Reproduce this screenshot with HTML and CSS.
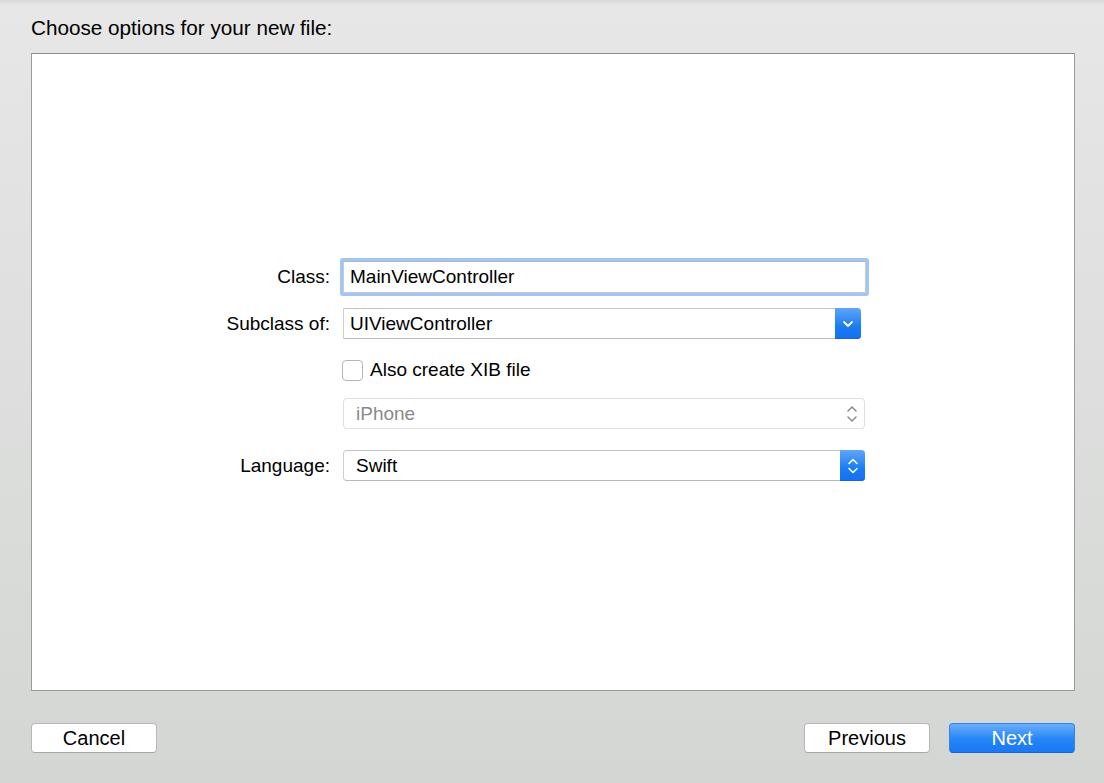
FILE: index.html
```html
<!DOCTYPE html>
<html>
<head>
<meta charset="utf-8">
<link rel="stylesheet" href="styles.css">
</head>
<body>
<div class="sheet">
  <div class="title">Choose options for your new file:</div>
  <div class="panel">
    <div class="form">
      <div class="row row-class">
        <div class="label">Class:</div>
        <div class="field focus"><span>MainViewController</span></div>
      </div>
      <div class="row row-sub">
        <div class="label">Subclass of:</div>
        <div class="popup combo">
          <span class="ptext">UIViewController</span>
          <span class="cbtn">
            <svg width="12" height="8" viewBox="0 0 12 8"><path d="M2 2 L6 6 L10 2" fill="none" stroke="#fff" stroke-width="1.8" stroke-linecap="round" stroke-linejoin="round"/></svg>
          </span>
        </div>
      </div>
      <div class="row row-check">
        <div class="label"></div>
        <div class="check"><span class="box"></span><span>Also create XIB file</span></div>
      </div>
      <div class="row row-dis">
        <div class="label"></div>
        <div class="popup disabled">
          <span class="ptext">iPhone</span>
          <span class="arrows">
            <svg width="12" height="20" viewBox="0 0 12 20"><path d="M2 7 L6 3 L10 7 M2 13 L6 17 L10 13" fill="none" stroke="#8a8a8a" stroke-width="1.5" stroke-linecap="round" stroke-linejoin="round"/></svg>
          </span>
        </div>
      </div>
      <div class="row row-lang">
        <div class="label">Language:</div>
        <div class="popup wide">
          <span class="ptext">Swift</span>
          <span class="sbtn">
            <svg width="12" height="20" viewBox="0 0 12 20"><path d="M2 7.5 L6 3.5 L10 7.5 M2 12.5 L6 16.5 L10 12.5" fill="none" stroke="#fff" stroke-width="1.6" stroke-linecap="round" stroke-linejoin="round"/></svg>
          </span>
        </div>
      </div>
    </div>
  </div>
  <div class="buttons">
    <div class="btn">Cancel</div>
    <div class="spacer"></div>
    <div class="btn">Previous</div>
    <div class="btn primary">Next</div>
  </div>
</div>
</body>
</html>
```
FILE: styles.css
```css
html, body {
  margin: 0;
  padding: 0;
}
body {
  width: 1104px;
  height: 783px;
  overflow: hidden;
  font-family: "Liberation Sans", Arial, sans-serif;
  color: #000;
  background: linear-gradient(to bottom, #d9dad9 0px, #e6e7e6 6px, #e3e4e3 120px, #d4d6d4 783px);
}
.sheet {
  padding: 0 29px 0 31px;
  height: 783px;
  box-sizing: border-box;
}
.title {
  font-size: 20.7px;
  padding-top: 16px;
  height: 53px;
  box-sizing: border-box;
  line-height: 24px;
  color: #000;
}
.panel {
  height: 638px;
  background: #fff;
  border: 1px solid #9b9b9b;
  border-top-color: #8a8a8a;
  box-sizing: border-box;
  padding-top: 206px;
}
.form {
  display: flex;
  flex-direction: column;
}
.row {
  display: flex;
  align-items: center;
}
.label {
  width: 310px;
  text-align: right;
  font-size: 19px;
  padding-right: 12px;
  box-sizing: border-box;
}
.row-class { height: 32px; margin-top: 1px; }
.row-sub { height: 31px; margin-top: 15px; }
.row-check { height: 22px; margin-top: 20px; }
.row-dis { height: 31px; margin-top: 17px; }
.row-lang { height: 31px; margin-top: 21px; }

.field {
  margin-left: 1px;
  width: 523px;
  height: 32px;
  box-sizing: border-box;
  border: 1px solid #c8c8c8;
  border-top-color: #b5b5b5;
  background: #fff;
  font-size: 19px;
  padding-left: 6px;
  display: flex;
  align-items: center;
}
.field.focus {
  box-shadow: 0 0 0 3px #9fc6f6;
  border-radius: 1px;
}
.popup {
  margin-left: 1px;
  height: 31px;
  box-sizing: border-box;
  border: 1px solid #cdcdcd;
  border-top-color: #c4c4c4;
  border-bottom-color: #b9b9b9;
  background: #fff;
  display: flex;
  align-items: center;
  font-size: 19px;
  position: relative;
}
.ptext {
  flex: 1;
  padding-left: 6px;
}
.combo {
  width: 518px;
  border-right: none;
  border-radius: 0 4px 4px 0;
}
.cbtn {
  width: 26px;
  align-self: stretch;
  margin: -1px 0;
  background: linear-gradient(to bottom, #5fa6f8, #1a7cf5 60%, #166ff0);
  border-radius: 0 4px 4px 0;
  display: flex;
  align-items: center;
  justify-content: center;
  box-shadow: inset 0 -1px 0 #1563d9;
}
.disabled {
  width: 522px;
  border-radius: 4px;
  border-color: #e0e0e0;
  color: #8a8a8a;
  padding-left: 6px;
}
.disabled .arrows {
  width: 24px;
  display: flex;
  justify-content: center;
}
.wide {
  width: 522px;
  border-radius: 4px;
  border-right: none;
  padding-left: 6px;
}
.sbtn {
  width: 25px;
  align-self: stretch;
  margin: -1px 0;
  background: linear-gradient(to bottom, #5fa6f8, #1a7cf5 60%, #166ff0);
  border-radius: 0 4px 4px 0;
  display: flex;
  align-items: center;
  justify-content: center;
  box-shadow: inset 0 -1px 0 #1563d9;
}
.check {
  display: flex;
  align-items: center;
  font-size: 19px;
}
.box {
  width: 21px;
  height: 21px;
  box-sizing: border-box;
  border: 1px solid #b4b4b4;
  border-radius: 4px;
  background: #fff;
  margin-right: 7px;
}
.buttons {
  display: flex;
  margin-top: 32px;
  gap: 19px;
}
.spacer { flex: 1; }
.btn {
  width: 126px;
  height: 30px;
  box-sizing: border-box;
  border: 1px solid #b8b8b8;
  border-bottom-color: #a8a8a8;
  border-radius: 4px;
  background: #fff;
  display: flex;
  align-items: center;
  justify-content: center;
  font-size: 20px;
  color: #000;
}
.btn.primary {
  background: linear-gradient(to bottom, #6aaefa, #2584f7 55%, #1a78f3);
  border-color: #2e86f0;
  border-bottom-color: #1765dd;
  color: #fff;
}
```
